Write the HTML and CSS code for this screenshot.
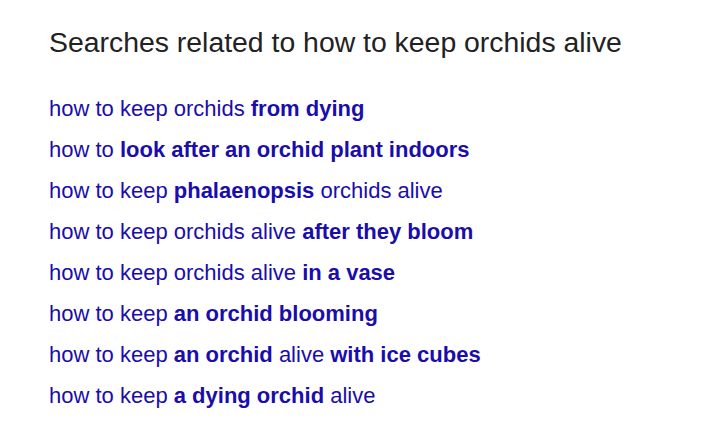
FILE: index.html
```html
<!DOCTYPE html>
<html>
<head>
<meta charset="utf-8">
<link rel="stylesheet" href="styles.css">
</head>
<body>
<div class="related">
  <h3 class="title">Searches related to how to keep orchids alive</h3>
  <ul class="list">
    <li><a href="#">how to keep orchids <b>from dying</b></a></li>
    <li><a href="#">how to <b>look after an orchid plant indoors</b></a></li>
    <li><a href="#">how to keep <b>phalaenopsis</b> orchids alive</a></li>
    <li><a href="#">how to keep orchids alive <b>after they bloom</b></a></li>
    <li><a href="#">how to keep orchids alive <b>in a vase</b></a></li>
    <li><a href="#">how to keep <b>an orchid blooming</b></a></li>
    <li><a href="#">how to keep <b>an orchid</b> alive <b>with ice cubes</b></a></li>
    <li><a href="#">how to keep <b>a dying orchid</b> alive</a></li>
  </ul>
</div>
</body>
</html>
```

FILE: styles.css
```css
html, body {
  margin: 0;
  padding: 0;
  background: #fff;
}
body {
  font-family: "Liberation Sans", Arial, sans-serif;
}
.related {
  padding: 26px 0 0 49px;
}
.title {
  margin: 0;
  font-size: 28.4px;
  font-weight: normal;
  color: #222;
  line-height: 32px;
}
.list {
  list-style: none;
  margin: 0;
  padding: 0;
  margin-top: 30px;
  display: flex;
  flex-direction: column;
}
.list li {
  font-size: 22px;
  line-height: 41px;
}
.list a {
  color: #1a0dab;
  text-decoration: none;
}
.list b {
  font-weight: bold;
}
```
